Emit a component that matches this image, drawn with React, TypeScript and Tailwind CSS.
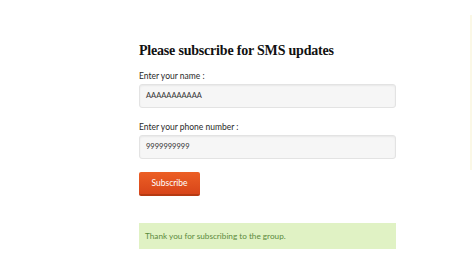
import React from "react";

export default function App() {
  return (
    <div className="w-[474px] h-[260px] bg-white flex overflow-hidden" style={{ fontFamily: "Lato, 'Open Sans', sans-serif" }}>
      <div className="w-[139px] shrink-0" />
      <div className="w-[257px] shrink-0 pt-[42px] flex flex-col">
        <div className="flex">
          <h1 className="font-['Liberation_Serif',serif] text-[14px] leading-[18px] font-bold tracking-[-0.2px] text-[#111] whitespace-nowrap">
            Please subscribe for SMS updates
          </h1>
        </div>
        <label className="mt-[10px] text-[8.5px] leading-[12px] text-[#2a2a2a]">Enter your name :</label>
        <div className="mt-[2px] h-[24px] rounded-[3px] border border-[#e3e3e3] bg-[#f6f6f6] shadow-[inset_0_1px_2px_rgba(0,0,0,0.06)] flex items-center px-[6px] text-[7.5px] text-[#333]">
          AAAAAAAAAAA
        </div>
        <label className="mt-[13px] text-[8.5px] leading-[12px] text-[#2a2a2a]">Enter your phone number :</label>
        <div className="mt-[2px] h-[24px] rounded-[3px] border border-[#e3e3e3] bg-[#f6f6f6] shadow-[inset_0_1px_2px_rgba(0,0,0,0.06)] flex items-center px-[6px] text-[7.5px] text-[#333]">
          9999999999
        </div>
        <div className="mt-[13px] flex">
          <button className="w-[61px] h-[24px] rounded-[2px] bg-gradient-to-b from-[#ec5f25] to-[#d8451a] border-b-2 border-[#b63a12] text-white text-[8.5px]">
            Subscribe
          </button>
        </div>
        <div className="mt-[27px] h-[26px] bg-[#e0f2c4] flex items-center px-[6px] text-[8.2px] text-[#5b8a3c]">
          Thank you for subscribing to the group.
        </div>
      </div>
      <div className="flex-1" />
      <div className="w-[2px] mr-[2px] mt-[15px] h-[155px] bg-[#fbf8e6]" />
    </div>
  );
}
